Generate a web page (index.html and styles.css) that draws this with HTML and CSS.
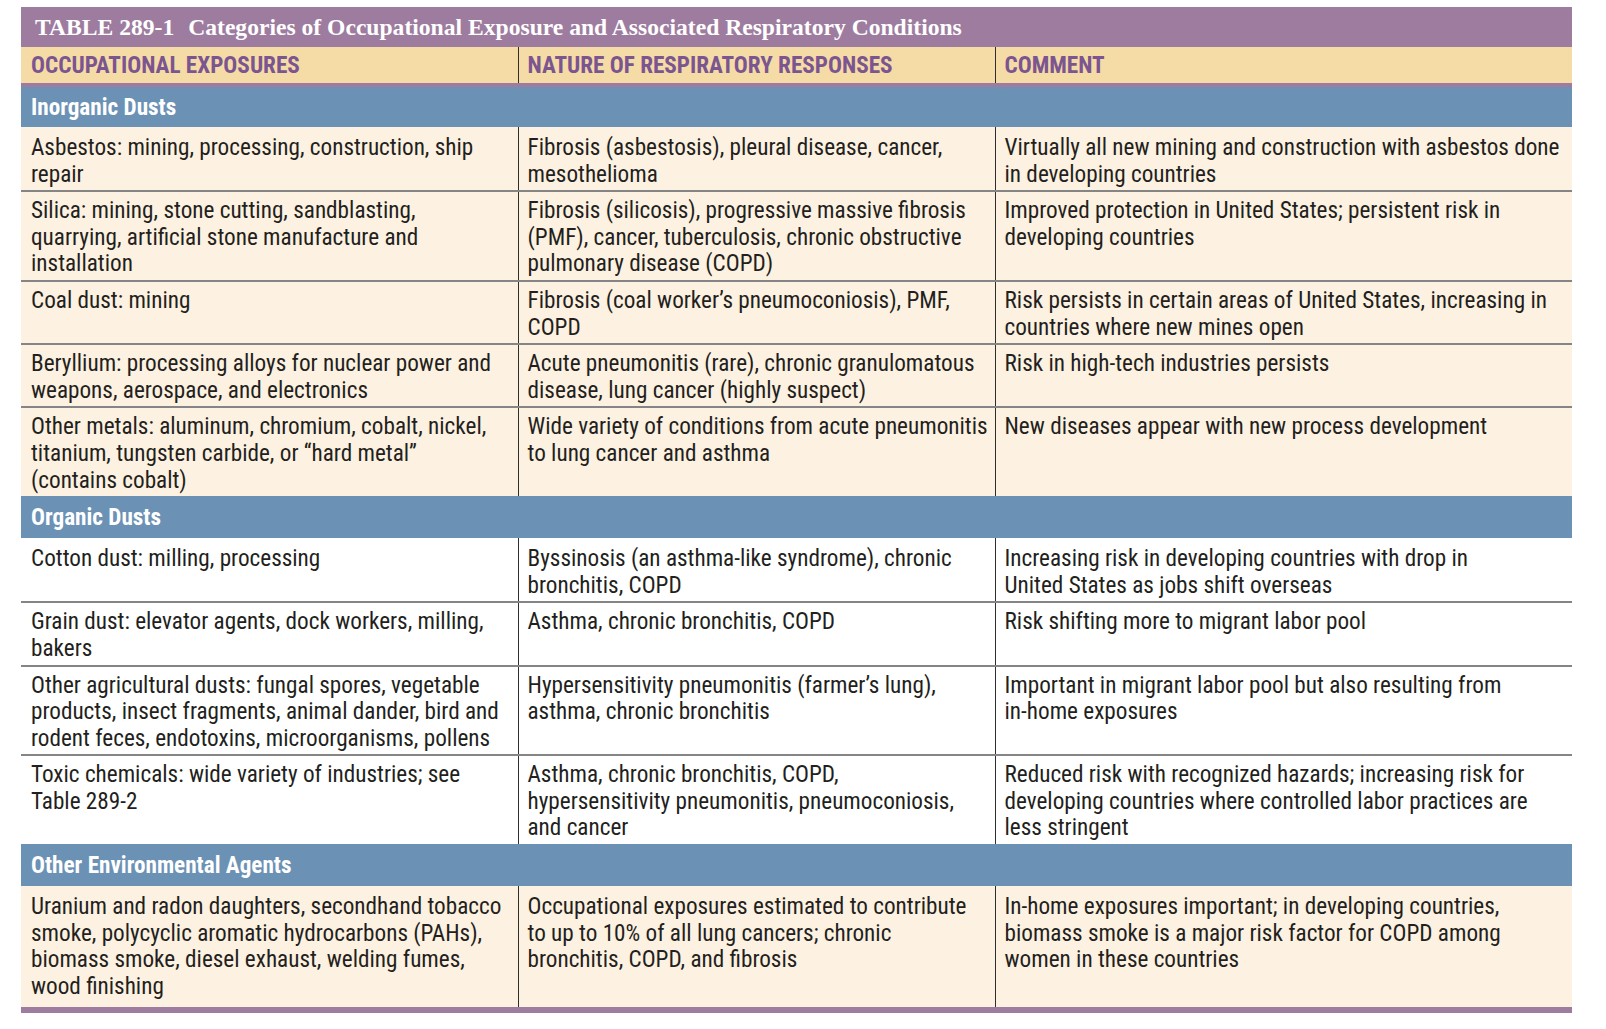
FILE: index.html
```html
<!DOCTYPE html>
<html lang="en">
<head>
<meta charset="utf-8">
<title>TABLE 289-1</title>
<link rel="stylesheet" href="styles.css">
</head>
<body>
<table class="tbl">
  <colgroup>
    <col class="c1">
    <col class="c2">
    <col class="c3">
  </colgroup>
  <thead>
    <tr class="title-row">
      <th colspan="3" class="title"><span class="tnum">TABLE 289-1</span>Categories of Occupational Exposure and Associated Respiratory Conditions</th>
    </tr>
    <tr class="head-row">
      <th>OCCUPATIONAL EXPOSURES</th>
      <th>NATURE OF RESPIRATORY RESPONSES</th>
      <th>COMMENT</th>
    </tr>
  </thead>
  <tbody class="sec cream">
    <tr class="band band-first"><td colspan="3">Inorganic Dusts</td></tr>
    <tr class="first">
      <td>Asbestos: mining, processing, construction, ship<br>repair</td>
      <td>Fibrosis (asbestosis), pleural disease, cancer,<br>mesothelioma</td>
      <td>Virtually all new mining and construction with asbestos done<br>in developing countries</td>
    </tr>
    <tr>
      <td>Silica: mining, stone cutting, sandblasting,<br>quarrying, artificial stone manufacture and<br>installation</td>
      <td>Fibrosis (silicosis), progressive massive fibrosis<br>(PMF), cancer, tuberculosis, chronic obstructive<br>pulmonary disease (COPD)</td>
      <td>Improved protection in United States; persistent risk in<br>developing countries</td>
    </tr>
    <tr>
      <td>Coal dust: mining</td>
      <td>Fibrosis (coal worker’s pneumoconiosis), PMF,<br>COPD</td>
      <td>Risk persists in certain areas of United States, increasing in<br>countries where new mines open</td>
    </tr>
    <tr>
      <td>Beryllium: processing alloys for nuclear power and<br>weapons, aerospace, and electronics</td>
      <td>Acute pneumonitis (rare), chronic granulomatous<br>disease, lung cancer (highly suspect)</td>
      <td>Risk in high-tech industries persists</td>
    </tr>
    <tr>
      <td>Other metals: aluminum, chromium, cobalt, nickel,<br>titanium, tungsten carbide, or “hard metal”<br>(contains cobalt)</td>
      <td>Wide variety of conditions from acute pneumonitis<br>to lung cancer and asthma</td>
      <td>New diseases appear with new process development</td>
    </tr>
  </tbody>
  <tbody class="sec white">
    <tr class="band"><td colspan="3">Organic Dusts</td></tr>
    <tr class="first">
      <td>Cotton dust: milling, processing</td>
      <td>Byssinosis (an asthma-like syndrome), chronic<br>bronchitis, COPD</td>
      <td>Increasing risk in developing countries with drop in<br>United States as jobs shift overseas</td>
    </tr>
    <tr>
      <td>Grain dust: elevator agents, dock workers, milling,<br>bakers</td>
      <td>Asthma, chronic bronchitis, COPD</td>
      <td>Risk shifting more to migrant labor pool</td>
    </tr>
    <tr>
      <td>Other agricultural dusts: fungal spores, vegetable<br>products, insect fragments, animal dander, bird and<br>rodent feces, endotoxins, microorganisms, pollens</td>
      <td>Hypersensitivity pneumonitis (farmer’s lung),<br>asthma, chronic bronchitis</td>
      <td>Important in migrant labor pool but also resulting from<br>in-home exposures</td>
    </tr>
    <tr>
      <td>Toxic chemicals: wide variety of industries; see<br>Table 289-2</td>
      <td>Asthma, chronic bronchitis, COPD,<br>hypersensitivity pneumonitis, pneumoconiosis,<br>and cancer</td>
      <td>Reduced risk with recognized hazards; increasing risk for<br>developing countries where controlled labor practices are<br>less stringent</td>
    </tr>
  </tbody>
  <tbody class="sec cream">
    <tr class="band"><td colspan="3">Other Environmental Agents</td></tr>
    <tr class="first last">
      <td>Uranium and radon daughters, secondhand tobacco<br>smoke, polycyclic aromatic hydrocarbons (PAHs),<br>biomass smoke, diesel exhaust, welding fumes,<br>wood finishing</td>
      <td>Occupational exposures estimated to contribute<br>to up to 10% of all lung cancers; chronic<br>bronchitis, COPD, and fibrosis</td>
      <td>In-home exposures important; in developing countries,<br>biomass smoke is a major risk factor for COPD among<br>women in these countries</td>
    </tr>
  </tbody>
</table>
</body>
</html>
```
FILE: styles.css
```css
html, body {
  margin: 0;
  padding: 0;
  background: #ffffff;
}

body {
  padding: 7px 0 0 21px;
}

.tbl {
  width: 1551px;
  border-collapse: collapse;
  table-layout: fixed;
  font-family: "Roboto Condensed", "DejaVu Sans Condensed", sans-serif;
  font-size: 23.2px;
  line-height: 26.6px;
  color: #231f20;
  border-bottom: 6px solid #9e7ca0;
}

.c1 { width: 497px; }
.c2 { width: 477px; }
.c3 { width: 577px; }

.title-row .title {
  background: #9e7c9f;
  color: #ffffff;
  font-family: "Liberation Serif", serif;
  font-weight: bold;
  font-size: 23.6px;
  text-align: left;
  vertical-align: middle;
  height: 40px;
  padding: 0 0 0 14px;
}

.tnum {
  margin-right: 14px;
}

.head-row th {
  background: #f5dba6;
  color: #7b5590;
  font-weight: bold;
  text-align: left;
  vertical-align: middle;
  height: 36px;
  padding: 0 4px 0 9px;
  border-bottom: 4px solid #9e7c9f;
}

.head-row th:first-child {
  padding-left: 10px;
}

.head-row th + th {
  border-left: 1px solid #2e2e2e;
}

.sec .band td {
  background: #6b91b5;
  color: #ffffff;
  font-weight: bold;
  height: 42px;
  padding: 0 10px;
  vertical-align: middle;
}

.sec .band-first td {
  height: 40px;
}

.sec tr:not(.band) td {
  vertical-align: top;
  padding: 5px 2px 3px 9px;
  border-top: 2px solid #858585;
}

.sec tr:not(.band) td:first-child {
  padding-left: 10px;
}

.sec tr.first td {
  border-top: none;
  padding-top: 7px;
}

.sec tr:not(.band) td + td {
  border-left: 1px solid #2e2e2e;
}

.cream tr:not(.band) td {
  background: #fdf1e1;
}

.white tr:not(.band) td {
  background: #ffffff;
}

.sec tr.last td {
  padding-bottom: 8px;
}
```
